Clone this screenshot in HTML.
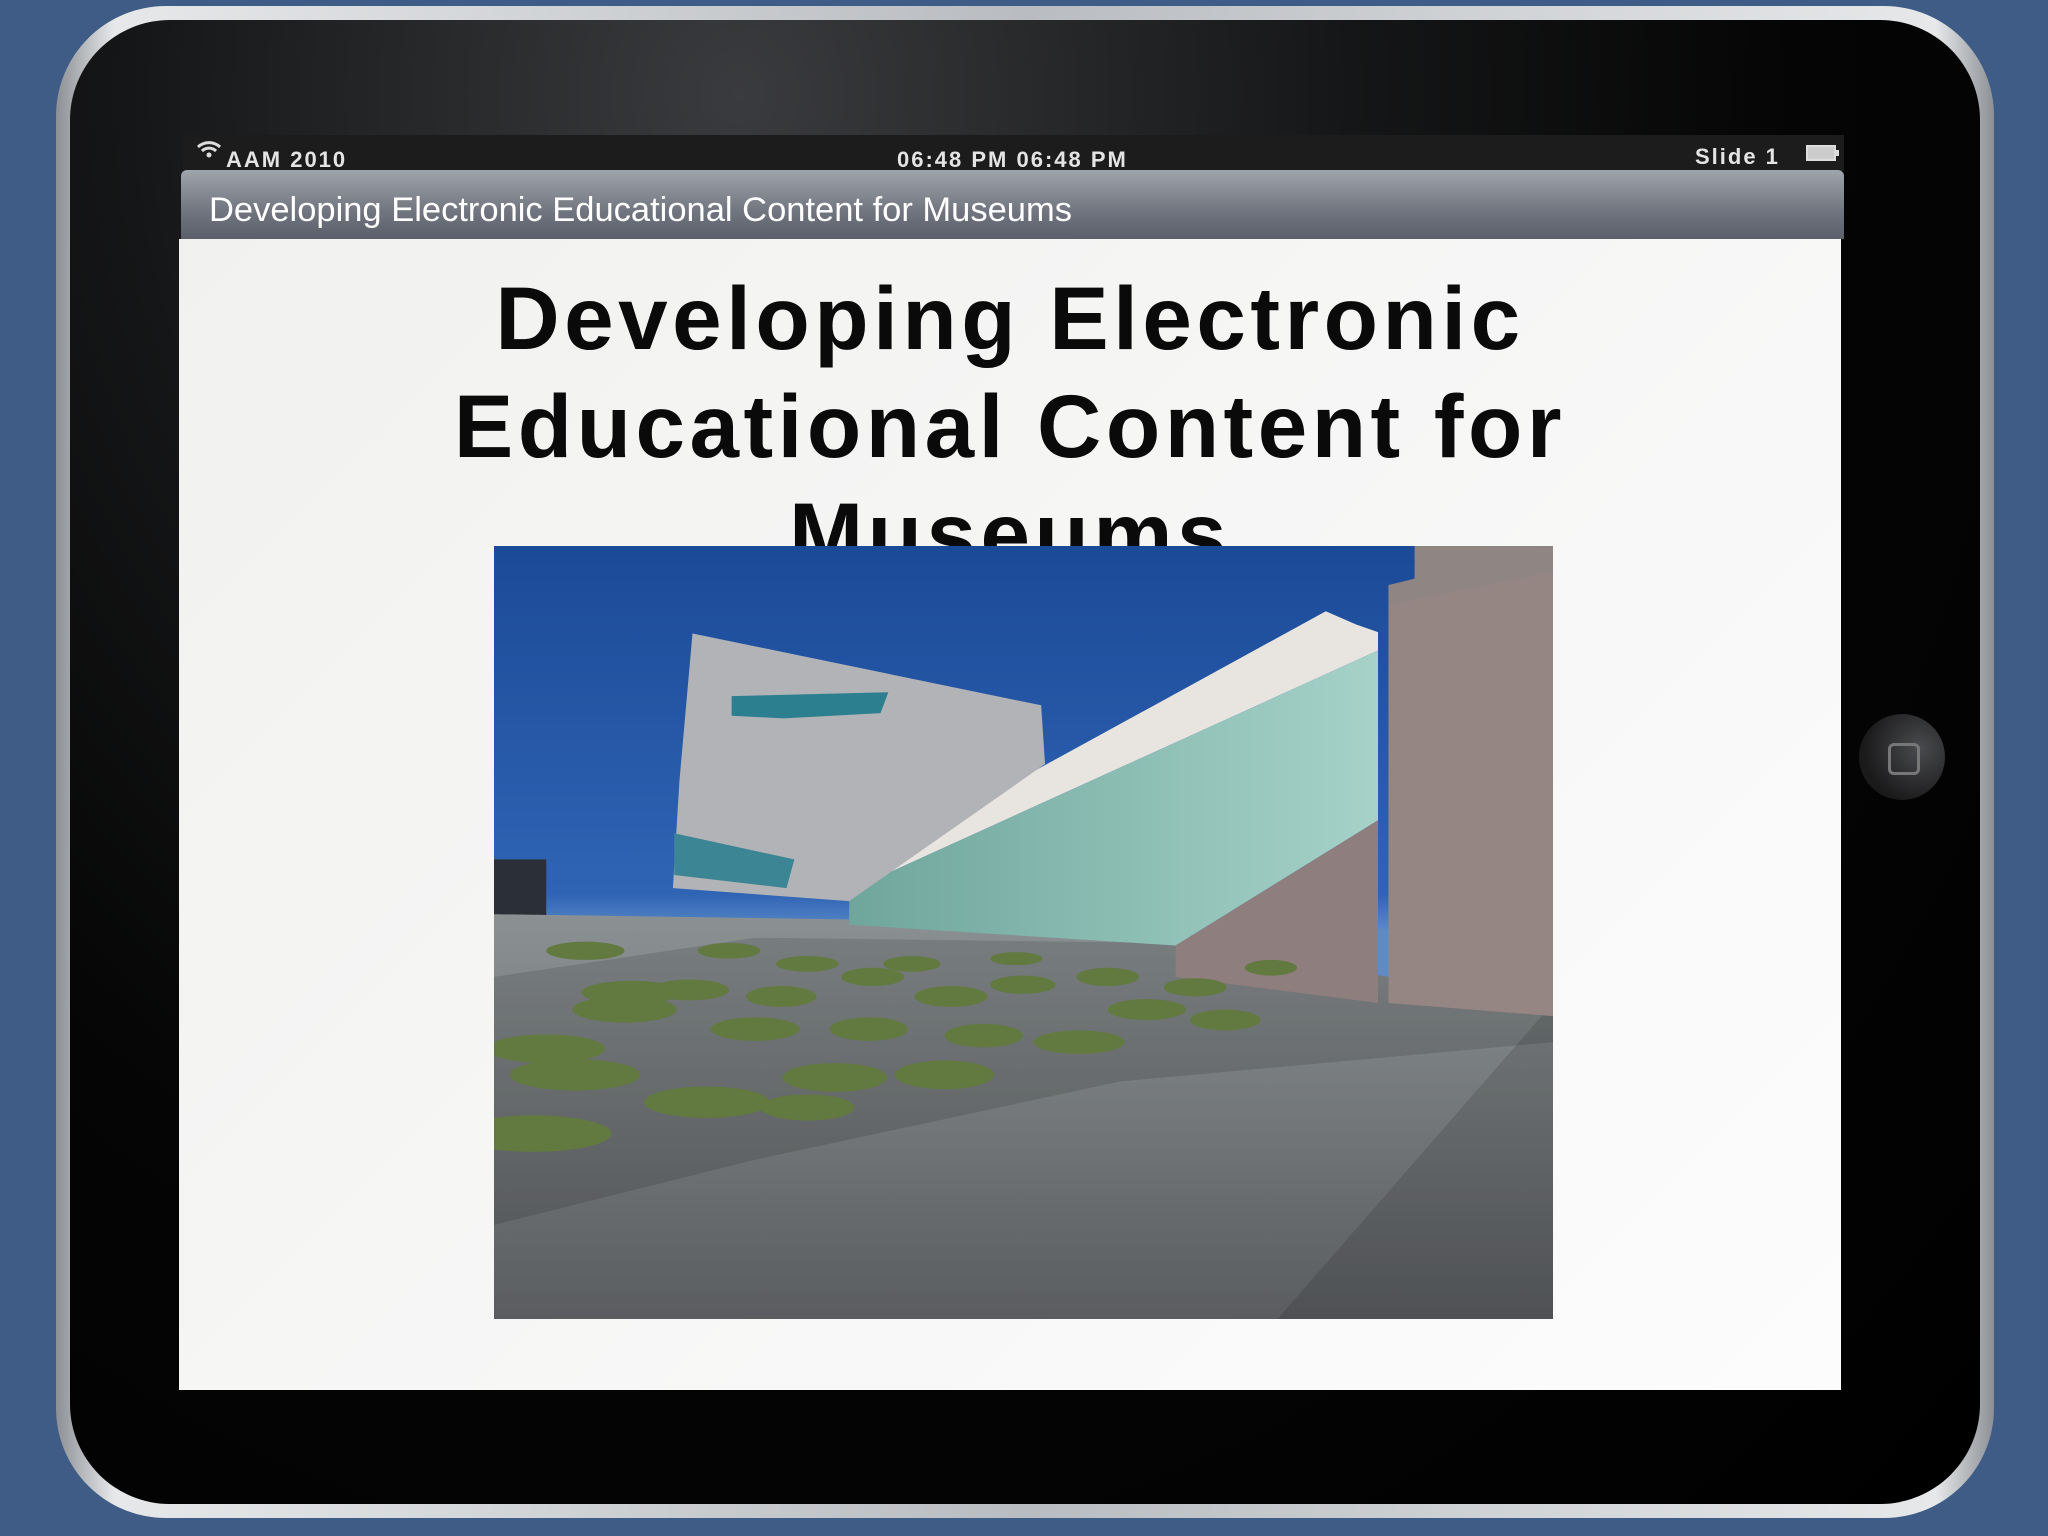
<!DOCTYPE html>
<html><head><meta charset="utf-8"><style>
html,body{margin:0;padding:0;width:2048px;height:1536px;overflow:hidden;background:#3f5c86;font-family:"Liberation Sans",sans-serif}
.dev{position:absolute;left:56px;top:6px;width:1938px;height:1512px;border-radius:110px;background:linear-gradient(90deg,#8c8f94,#e6e8ea 3%,#b9bcc0 50%,#e6e8ea 97%,#8c8f94);}
.bez{position:absolute;left:70px;top:20px;width:1910px;height:1484px;border-radius:100px;background:radial-gradient(ellipse at 35% 5%,#3a3b3e 0%,#151617 35%,#050505 60%,#000 100%);}
.status{position:absolute;left:183px;top:135px;width:1661px;height:36px;background:#1c1c1d;color:#e4e4e4;font-weight:bold;font-size:22px;letter-spacing:2px}
.status span{position:absolute;top:12px}
.nav{position:absolute;left:181px;top:170px;width:1663px;height:69px;background:linear-gradient(#a0a4ab,#70757f 60%,#5b5f6a);border-radius:6px 6px 0 0}
.nav div{position:absolute;left:28px;top:21px;font-size:34.5px;color:#fff}
.content{position:absolute;left:179px;top:239px;width:1662px;height:1151px;background:linear-gradient(135deg,#f1f1ef,#fcfcfd);overflow:hidden}
.title{position:absolute;left:0;width:100%;top:25px;text-align:center;font-size:89px;font-weight:bold;line-height:108px;letter-spacing:4.5px;color:#0a0a0a}
.photo{position:absolute;left:315px;top:307px;width:1059px;height:773px}
.home{position:absolute;left:1859px;top:714px;width:86px;height:86px;border-radius:50%;background:radial-gradient(circle at 70% 40%,#4a4b4e,#1a1a1b 70%)}
.home div{position:absolute;left:29px;top:29px;width:26px;height:26px;border:3px solid #777;border-radius:6px}
</style></head><body>
<div class="dev"></div>
<div class="bez"></div>
<div class="status">
<svg style="position:absolute;left:13px;top:5px" width="26" height="20" viewBox="0 0 26 20"><path d="M2 7 A16 16 0 0 1 24 7" stroke="#ddd" stroke-width="3" fill="none"/><path d="M6 11 A10 10 0 0 1 20 11" stroke="#ddd" stroke-width="3" fill="none"/><circle cx="13" cy="15" r="2.5" fill="#ddd"/></svg>
<span style="left:43px">AAM 2010</span>
<span style="left:714px">06:48 PM 06:48 PM</span>
<span style="left:1512px;top:9px">Slide 1</span>
<div style="position:absolute;left:1623px;top:10px;width:26px;height:12px;border:2px solid #ddd;background:#ccc"></div>
<div style="position:absolute;left:1653px;top:15px;width:3px;height:6px;background:#ddd"></div>
</div>
<div class="nav"><div>Developing Electronic Educational Content for Museums</div></div>
<div class="content">
<div class="title">Developing Electronic<br>Educational Content for<br>Museums</div>
<svg class="photo" viewBox="0 0 811 592" preserveAspectRatio="none">
<defs>
<linearGradient id="sky" x1="0" y1="0" x2="0" y2="1"><stop offset="0" stop-color="#1b4a98"/><stop offset="0.45" stop-color="#2f64b4"/><stop offset="0.5" stop-color="#5c8cc8"/></linearGradient>
<linearGradient id="gr" x1="0" y1="0" x2="0" y2="1"><stop offset="0" stop-color="#8b9193"/><stop offset="0.5" stop-color="#737779"/><stop offset="1" stop-color="#5a5c60"/></linearGradient>
<linearGradient id="gl" x1="0" y1="0" x2="1" y2="0"><stop offset="0" stop-color="#6fa69c"/><stop offset="1" stop-color="#a6d2c8"/></linearGradient>
</defs>
<rect width="811" height="592" fill="url(#sky)"/>
<rect x="0" y="240" width="40" height="45" fill="#2b3038"/>
<polygon points="0,282 272,286 522,304 811,350 811,592 0,592" fill="url(#gr)"/>
<polygon points="0,330 200,300 522,304 811,350 811,380 480,410 200,470 0,520" fill="#000" opacity="0.12"/>
<polygon points="811,350 811,592 600,592" fill="#000" opacity="0.12"/>
<polygon points="685,30 811,0 811,360 685,350" fill="#958684"/>
<polygon points="685,30 705,25 705,0 811,0 811,20 685,45" fill="#8f8583"/>
<polygon points="272,250 637,50 660,60 677,66 677,80 272,264" fill="#e8e4df"/>
<polygon points="272,264 677,80 677,210 522,306 272,290" fill="url(#gl)"/>
<polygon points="522,306 677,210 677,350 522,330" fill="#8e7e7e"/>
<polygon points="152,67 419,122 422,167 272,272 137,262 142,180" fill="#b1b3b6"/>
<polygon points="182,115 302,112 296,128 222,132 182,130" fill="#2b7f8e"/>
<polygon points="138,220 230,240 224,262 138,252" fill="#3b8594"/>
<g fill="#62793f">
<ellipse cx="163" cy="426" rx="48" ry="12"/><ellipse cx="261" cy="407" rx="40" ry="11"/><ellipse cx="345" cy="405" rx="38" ry="11"/><ellipse cx="240" cy="430" rx="36" ry="10"/>
<ellipse cx="100" cy="355" rx="40" ry="10"/><ellipse cx="200" cy="370" rx="34" ry="9"/><ellipse cx="287" cy="370" rx="30" ry="9"/><ellipse cx="375" cy="375" rx="30" ry="9"/>
<ellipse cx="500" cy="355" rx="30" ry="8"/><ellipse cx="560" cy="363" rx="27" ry="8"/><ellipse cx="537" cy="338" rx="24" ry="7"/><ellipse cx="448" cy="380" rx="35" ry="9"/>
<ellipse cx="40" cy="385" rx="45" ry="11"/><ellipse cx="62" cy="405" rx="50" ry="12"/><ellipse cx="30" cy="450" rx="60" ry="14"/><ellipse cx="105" cy="342" rx="38" ry="9"/>
<ellipse cx="350" cy="345" rx="28" ry="8"/><ellipse cx="405" cy="336" rx="25" ry="7"/><ellipse cx="470" cy="330" rx="24" ry="7"/><ellipse cx="595" cy="323" rx="20" ry="6"/>
<ellipse cx="150" cy="340" rx="30" ry="8"/><ellipse cx="220" cy="345" rx="27" ry="8"/><ellipse cx="290" cy="330" rx="24" ry="7"/><ellipse cx="70" cy="310" rx="30" ry="7"/>
<ellipse cx="180" cy="310" rx="24" ry="6"/><ellipse cx="240" cy="320" rx="24" ry="6"/><ellipse cx="320" cy="320" rx="22" ry="6"/><ellipse cx="400" cy="316" rx="20" ry="5"/>
</g>
</svg>
</div>
<div class="home"><div></div></div>
</body></html>
